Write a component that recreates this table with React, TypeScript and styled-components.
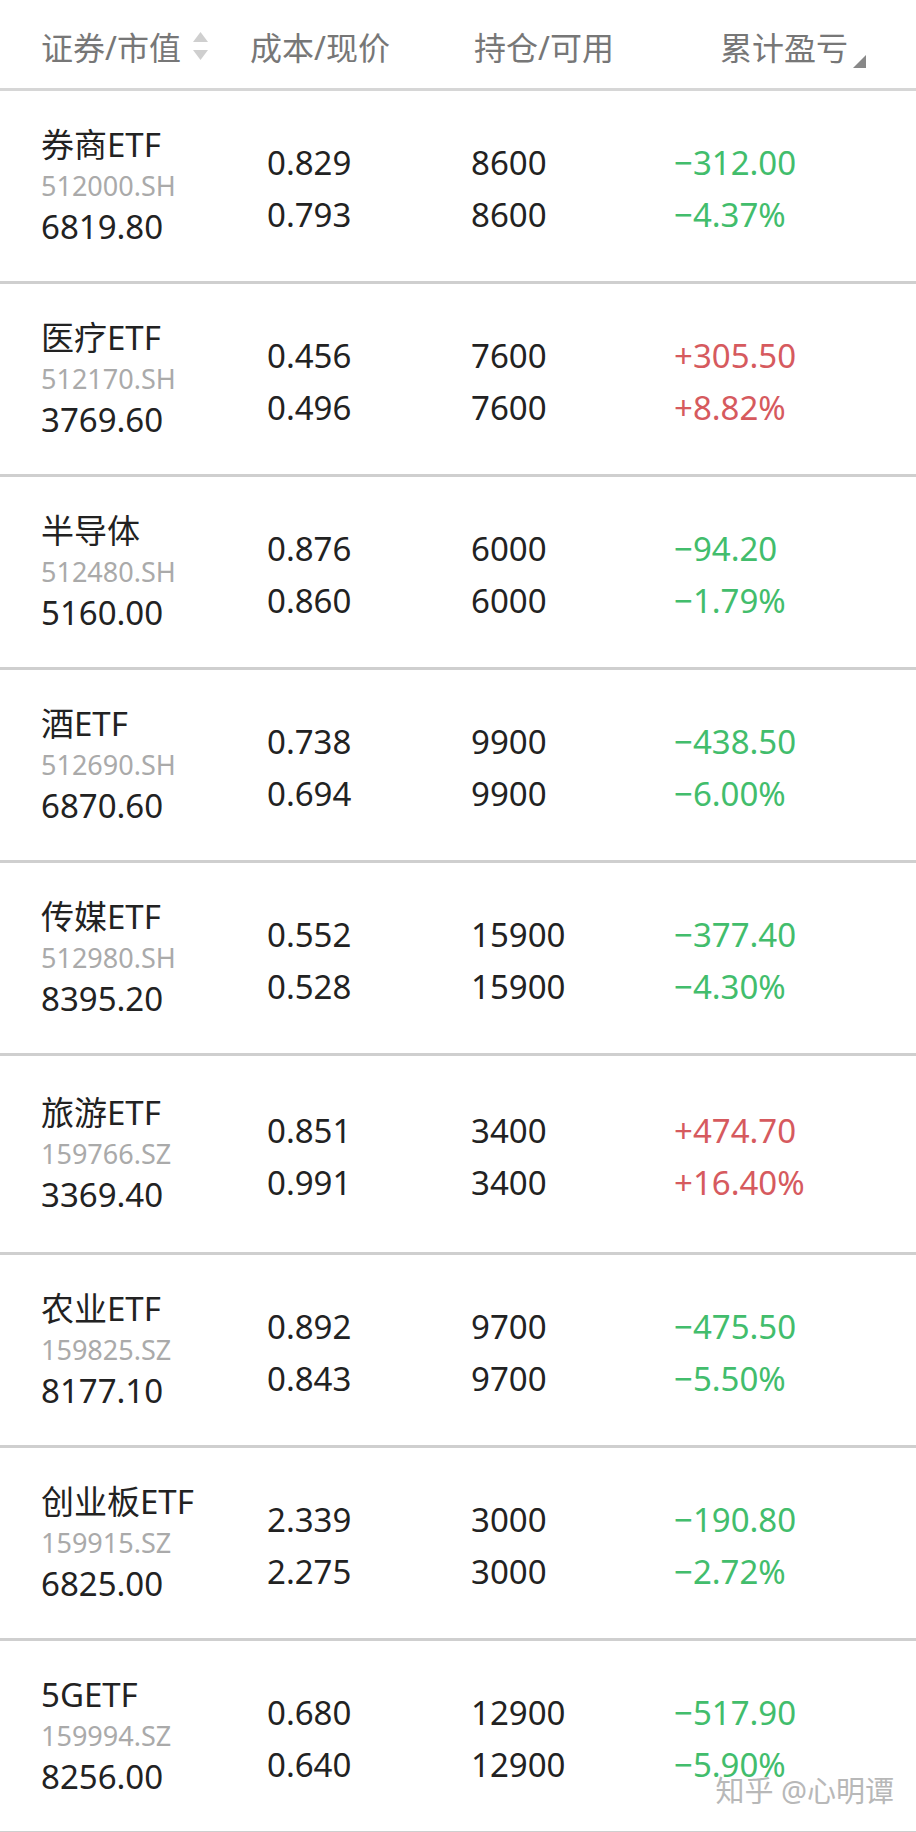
import React from "react";
import styled, { createGlobalStyle } from "styled-components";

const GlobalStyle = createGlobalStyle`
  html, body {
    margin: 0;
    padding: 0;
    background: #fff;
  }
  body {
    font-family: "Noto Sans", "Noto Sans CJK SC", sans-serif;
    color: #222;
  }
`;

const Page = styled.div`
  position: relative;
  width: 916px;
  height: 1832px;
  overflow: hidden;
  background: #fff;
`;

const Header = styled.div`
  display: grid;
  grid-template-columns: 209px 224px 246px 1fr;
  align-items: center;
  height: 85px;
  padding-left: 41px;
  padding-top: 3px;
  border-bottom: 3px solid #d6d6d6;
  color: #777;
  font-size: 32px;
`;

const HeadCell = styled.div`
  display: flex;
  align-items: center;
  white-space: nowrap;
`;

const SortIcon = styled.span`
  display: inline-flex;
  flex-direction: column;
  gap: 8px;
  margin-left: 12px;

  & svg {
    display: block;
  }
`;

const Corner = styled.span`
  align-self: flex-end;
  margin: 0 0 1px 5px;
  width: 0;
  height: 0;
  border-left: 13px solid transparent;
  border-bottom: 13px solid #888;
`;

const Row = styled.div<{ $tall?: boolean }>`
  display: grid;
  grid-template-columns: 226px 204px 203px 1fr;
  align-items: center;
  height: ${(p) => (p.$tall ? 196 : 190)}px;
  padding-left: 41px;
  border-bottom: 3px solid #cfcfcf;
`;

const NameCol = styled.div`
  display: flex;
  flex-direction: column;
`;

const Name = styled.div`
  font-size: 33px;
  line-height: 42px;
  color: #222;
  white-space: nowrap;
`;

const Code = styled.div`
  font-size: 27px;
  line-height: 40px;
  color: #aaa;
`;

const Value = styled.div`
  font-size: 33px;
  line-height: 42px;
  color: #222;
`;

const NumCol = styled.div<{ $tone?: "up" | "down" }>`
  display: flex;
  flex-direction: column;
  margin-top: 5px;
  font-size: 33px;
  line-height: 52px;
  color: ${(p) =>
    p.$tone === "up" ? "#d65a5e" : p.$tone === "down" ? "#42bd6c" : "#222"};
`;

const Watermark = styled.div`
  position: absolute;
  right: 22px;
  bottom: 22px;
  font-size: 29px;
  color: #b8b8b8;
  white-space: nowrap;
`;

type Item = {
  name: string;
  code: string;
  value: string;
  cost: string;
  price: string;
  qty: string;
  pnl: string;
  pct: string;
  tall?: boolean;
};

const items: Item[] = [
  { name: "券商ETF", code: "512000.SH", value: "6819.80", cost: "0.829", price: "0.793", qty: "8600", pnl: "-312.00", pct: "-4.37%" },
  { name: "医疗ETF", code: "512170.SH", value: "3769.60", cost: "0.456", price: "0.496", qty: "7600", pnl: "+305.50", pct: "+8.82%" },
  { name: "半导体", code: "512480.SH", value: "5160.00", cost: "0.876", price: "0.860", qty: "6000", pnl: "-94.20", pct: "-1.79%" },
  { name: "酒ETF", code: "512690.SH", value: "6870.60", cost: "0.738", price: "0.694", qty: "9900", pnl: "-438.50", pct: "-6.00%" },
  { name: "传媒ETF", code: "512980.SH", value: "8395.20", cost: "0.552", price: "0.528", qty: "15900", pnl: "-377.40", pct: "-4.30%" },
  { name: "旅游ETF", code: "159766.SZ", value: "3369.40", cost: "0.851", price: "0.991", qty: "3400", pnl: "+474.70", pct: "+16.40%", tall: true },
  { name: "农业ETF", code: "159825.SZ", value: "8177.10", cost: "0.892", price: "0.843", qty: "9700", pnl: "-475.50", pct: "-5.50%" },
  { name: "创业板ETF", code: "159915.SZ", value: "6825.00", cost: "2.339", price: "2.275", qty: "3000", pnl: "-190.80", pct: "-2.72%" },
  { name: "5GETF", code: "159994.SZ", value: "8256.00", cost: "0.680", price: "0.640", qty: "12900", pnl: "-517.90", pct: "-5.90%" }
];

// the app draws the minus as a wide dash
const sign = (s: string) => s.replace("-", "\u2212");

function App(): JSX.Element {
  return (
    <Page>
      <GlobalStyle />
      <Header>
        <HeadCell>
          证券/市值
          <SortIcon>
            <svg width="15" height="10" viewBox="0 0 15 10">
              <polygon points="7.5,0 15,10 0,10" fill="#cfcfcf" />
            </svg>
            <svg width="15" height="10" viewBox="0 0 15 10">
              <polygon points="0,0 15,0 7.5,10" fill="#cfcfcf" />
            </svg>
          </SortIcon>
        </HeadCell>
        <HeadCell>成本/现价</HeadCell>
        <HeadCell>持仓/可用</HeadCell>
        <HeadCell>
          累计盈亏
          <Corner />
        </HeadCell>
      </Header>
      {items.map((it) => {
        const tone = it.pnl.startsWith("+") ? "up" : "down";
        return (
          <Row key={it.code} $tall={it.tall}>
            <NameCol>
              <Name>{it.name}</Name>
              <Code>{it.code}</Code>
              <Value>{it.value}</Value>
            </NameCol>
            <NumCol>
              <span>{it.cost}</span>
              <span>{it.price}</span>
            </NumCol>
            <NumCol>
              <span>{it.qty}</span>
              <span>{it.qty}</span>
            </NumCol>
            <NumCol $tone={tone}>
              <span>{sign(it.pnl)}</span>
              <span>{sign(it.pct)}</span>
            </NumCol>
          </Row>
        );
      })}
      <Watermark>知乎 @心明谭</Watermark>
    </Page>
  );
}

export default App;
